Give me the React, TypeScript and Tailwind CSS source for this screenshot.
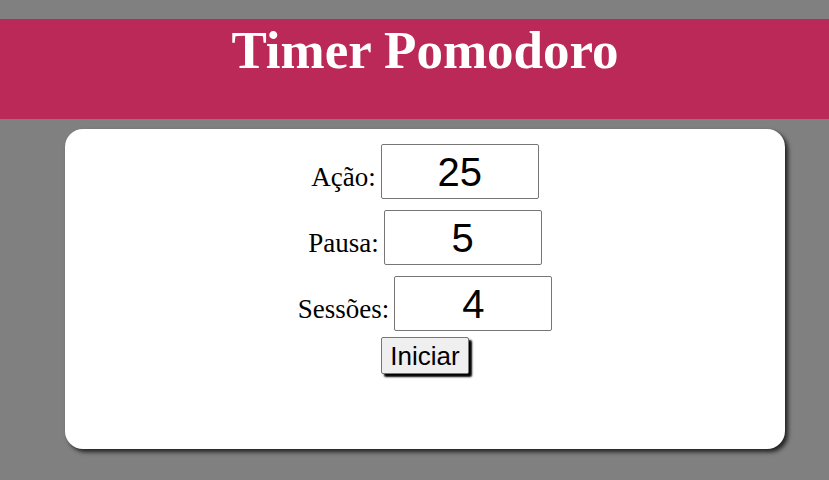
export default function App() {
  return (
    <div className="min-h-[480px] w-full bg-[#808080] pt-[19px] pb-[31px]" style={{ fontFamily: '"Liberation Serif", serif' }}>
      <div className="h-[100px] bg-[#ba2958] pl-[21px] text-center">
        <h1 className="pt-[5px] text-[53px] font-bold leading-[53px] text-white" style={{ fontFamily: '"Liberation Serif", serif' }}>
          Timer Pomodoro
        </h1>
      </div>
      <div className="ml-[65px] mt-[10px] flex h-[320px] w-[720px] flex-col items-center rounded-[18px] bg-white pt-[15px] shadow-[3px_3px_4px_#222]">
        <div className="flex flex-col items-center gap-[11px]">
          {[
            ['Ação:', '25'],
            ['Pausa:', '5'],
            ['Sessões:', '4'],
          ].map(([label, value]) => (
            <div key={label} className="flex items-baseline gap-[5px]">
              <span className="text-[27px] text-black">{label}</span>
              <input
                readOnly
                value={value}
                className="h-[55px] w-[158px] rounded-[2px] border border-[#767676] bg-white text-center text-[40px] text-black outline-none"
                style={{ fontFamily: '"Liberation Sans", Arial, sans-serif' }}
              />
            </div>
          ))}
        </div>
        <button
          className="mt-[6px] h-[37px] w-[88px] rounded-[2px] border border-[#767676] bg-[#efefef] text-[26px] leading-none text-black shadow-[3px_3px_2px_#000]"
          style={{ fontFamily: '"Liberation Sans", Arial, sans-serif' }}
        >
          Iniciar
        </button>
      </div>
    </div>
  );
}
